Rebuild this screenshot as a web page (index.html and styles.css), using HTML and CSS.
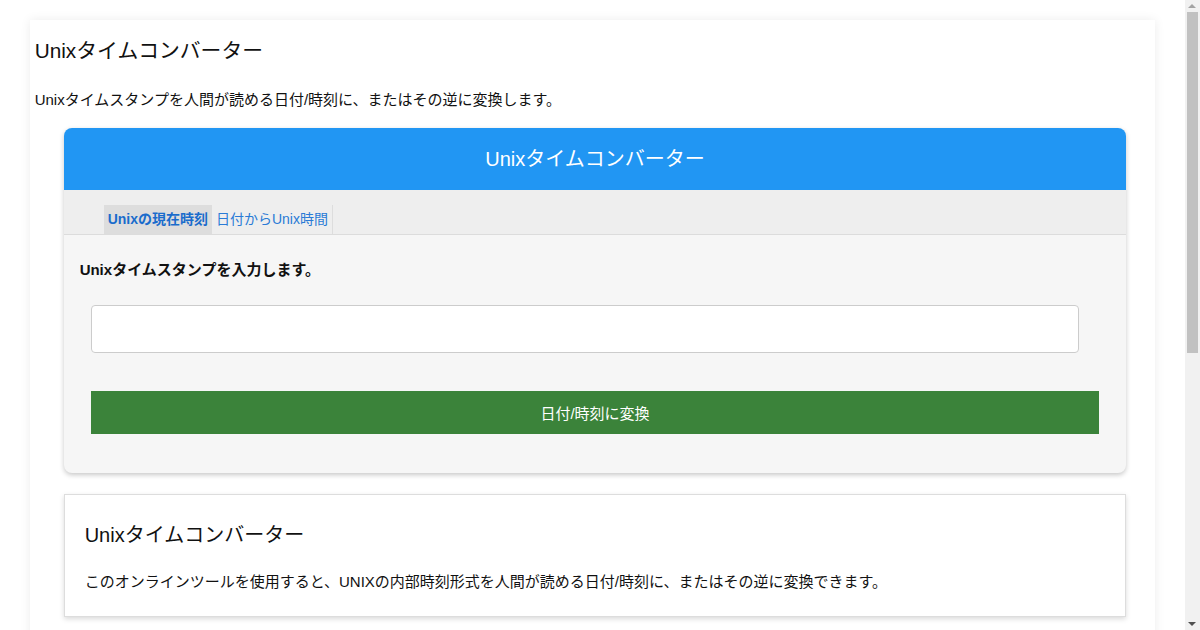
FILE: index.html
```html
<!DOCTYPE html>
<html lang="ja">
<head>
<meta charset="utf-8">
<title>Unixタイムコンバーター</title>
<link rel="stylesheet" href="styles.css">
</head>
<body>
<div class="page">
  <h1 class="page-title">Unixタイムコンバーター</h1>
  <p class="page-lead">Unixタイムスタンプを人間が読める日付/時刻に、またはその逆に変換します。</p>

  <div class="converter">
    <div class="converter-head">Unixタイムコンバーター</div>
    <div class="tabs">
      <span class="tab tab-active">Unixの現在時刻</span><span class="tab tab-sep">日付からUnix時間</span>
    </div>
    <div class="converter-body">
      <div class="field-label">Unixタイムスタンプを入力します。</div>
      <div class="form">
        <input class="ts-input" type="text">
        <button class="convert-btn" type="button">日付/時刻に変換</button>
      </div>
    </div>
  </div>

  <div class="info-card">
    <h2 class="info-title">Unixタイムコンバーター</h2>
    <p class="info-text">このオンラインツールを使用すると、UNIXの内部時刻形式を人間が読める日付/時刻に、またはその逆に変換できます。</p>
  </div>

  <div class="info-card">
    <h2 class="info-title">Unixタイムスタンプとは？</h2>
    <p class="info-text">Unixタイムスタンプは、1970年1月1日00:00:00 UTCからの経過秒数です。</p>
    <p class="info-text">多くのオペレーティングシステムやプログラミング言語で日付と時刻を表すために使用されています。</p>
    <p class="info-text">このツールでは、秒単位のタイムスタンプを入力して、ローカル時刻とUTCの両方で結果を確認できます。</p>
    <p class="info-text">また、日付と時刻を入力して、対応するUnixタイムスタンプを取得することもできます。</p>
  </div>
</div>

<div class="scrollbar" aria-hidden="true">
  <span class="sb-arrow sb-up"></span>
  <span class="sb-thumb"></span>
  <span class="sb-arrow sb-down"></span>
</div>
</body>
</html>
```

FILE: styles.css
```css
* { box-sizing: border-box; }

html, body {
  margin: 0;
  padding: 0;
  background: #ffffff;
}

body {
  padding-right: 15px;
  font-family: "Liberation Sans", "Noto Sans CJK JP", sans-serif;
  color: #111;
}

.page {
  width: 95%;
  margin: 20px auto 40px;
  padding: 19px 5px 30px;
  background: #fff;
  box-shadow: 0 0 10px rgba(0, 0, 0, 0.08);
}

.page-title {
  margin: 0 0 27px;
  font-size: 20.8px;
  line-height: 24px;
  font-weight: normal;
}

.page-lead {
  margin: 0 0 18px;
  font-size: 15px;
  line-height: 20px;
}

.converter {
  margin: 0 24px 0 29px;
  border-radius: 8px;
  overflow: hidden;
  background: #f6f6f6;
  box-shadow: 0 2px 5px rgba(0, 0, 0, 0.22);
}

.converter-head {
  height: 62px;
  line-height: 62px;
  text-align: center;
  background: #2196f3;
  color: #fff;
  font-size: 20px;
}

.tabs {
  display: flex;
  padding: 15px 0 0 40px;
  background: #eeeeee;
  border-bottom: 1px solid #dcdcdc;
}

.tab {
  height: 29px;
  line-height: 29px;
  padding: 0 4px;
  font-size: 14px;
  color: #2a7bd6;
}

.tab-active {
  background: #dddddd;
  color: #1a6ccc;
  font-weight: bold;
}

.tab-sep {
  border-right: 1px solid #dddddd;
}

.converter-body {
  padding: 25px 16px 39px;
}

.field-label {
  font-size: 15px;
  line-height: 20px;
  font-weight: bold;
  color: #111;
}

.form {
  display: flex;
  flex-direction: column;
  align-items: flex-start;
  gap: 38px;
  margin: 25px 11px 0;
}

.ts-input {
  width: 98%;
  height: 48px;
  border: 1px solid #cccccc;
  border-radius: 4px;
  background: #fff;
  font-size: 15px;
  padding: 0 10px;
}

.convert-btn {
  width: 100%;
  height: 43px;
  border: none;
  background: #3b833a;
  color: #fff;
  font-family: "Liberation Sans", "Noto Sans CJK JP", sans-serif;
  font-size: 15px;
}

.info-card {
  margin: 21px 24px 0 29px;
  padding: 28px 20px 24px;
  background: #fff;
  border: 1px solid #dddddd;
  box-shadow: 0 2px 5px rgba(0, 0, 0, 0.15);
}

.info-title {
  margin: 0 0 25px;
  font-size: 20px;
  line-height: 24px;
  font-weight: normal;
}

.info-text {
  margin: 0;
  font-size: 15px;
  line-height: 20px;
}

.info-text + .info-text {
  margin-top: 16px;
}

/* imitation of the browser's vertical scrollbar */
.scrollbar {
  position: fixed;
  top: 0;
  right: 0;
  width: 15px;
  height: 100%;
  background: #f1f1f1;
}

.sb-thumb {
  position: absolute;
  left: 2px;
  right: 2px;
  top: 12px;
  height: 341px;
  background: #c1c1c1;
}

.sb-arrow {
  position: absolute;
  left: 3px;
  width: 0;
  height: 0;
  border-left: 4.5px solid transparent;
  border-right: 4.5px solid transparent;
}

.sb-up {
  top: 4px;
  border-bottom: 4px solid #a3a3a3;
}

.sb-down {
  bottom: 4px;
  border-top: 4px solid #505050;
}
```
